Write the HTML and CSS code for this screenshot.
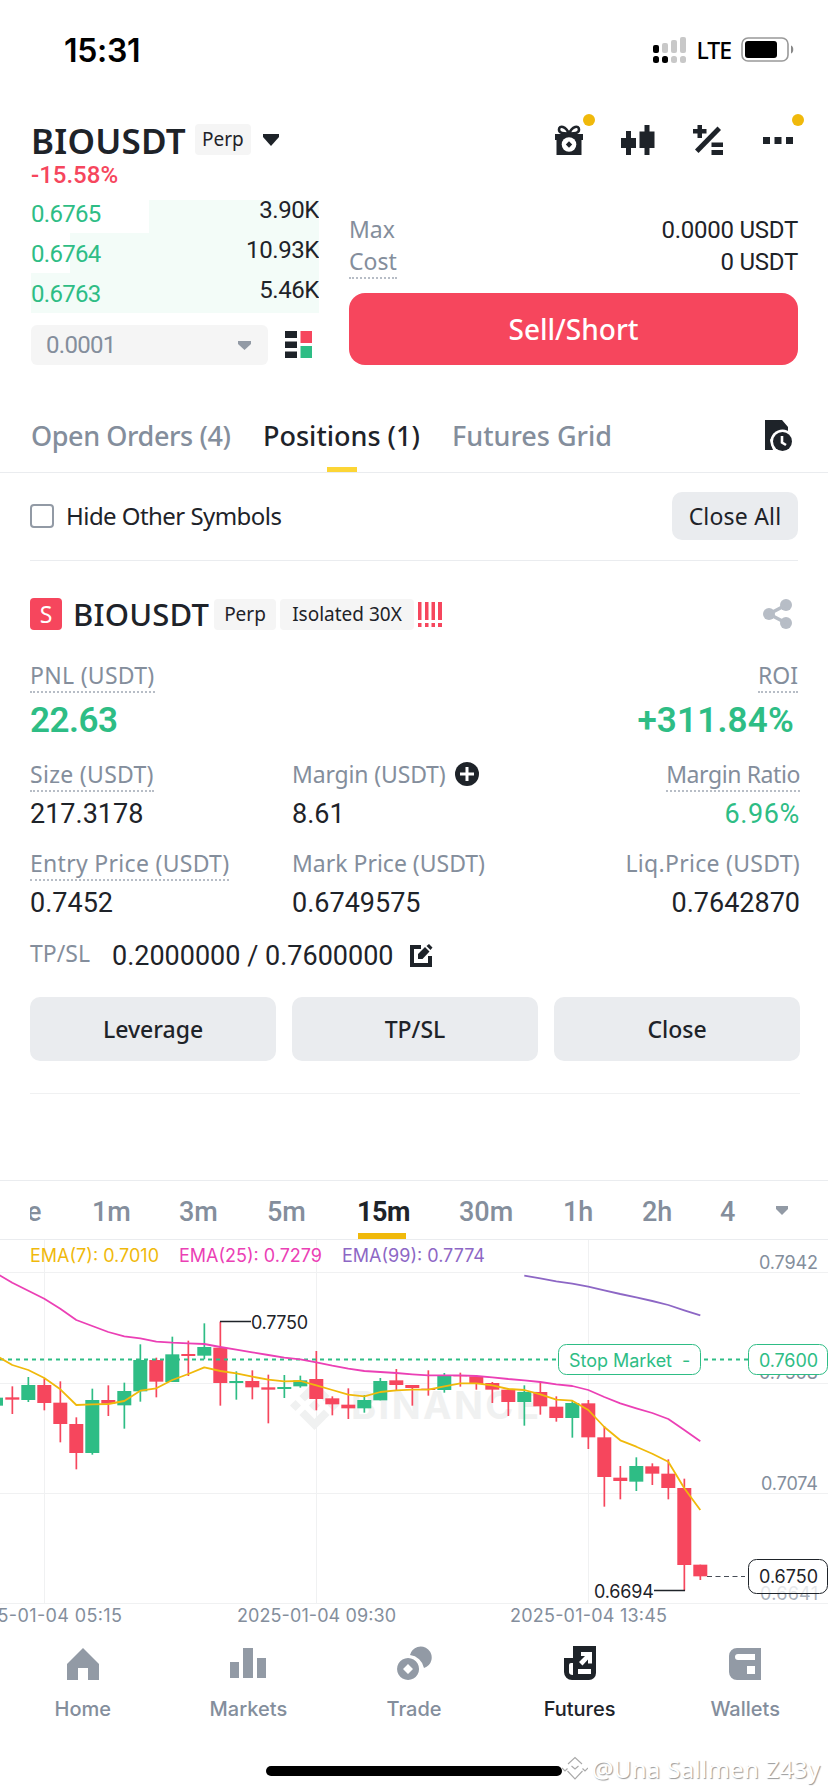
FILE: index.html
```html
<!DOCTYPE html>
<html lang="en">
<head>
  <meta charset="UTF-8">
  <meta name="viewport" content="width=device-width, initial-scale=1.0">
  <title>BIOUSDT Perp</title>
  <link rel="stylesheet" href="styles.css">
</head>
<body>

  <div class="status-bar">
    <span class="clock">15:31</span>
    <div class="status-icons">
      <svg class="signal" width="34" height="26" viewBox="0 0 34 26">
        <g fill="#000">
          <rect x="0" y="8" width="6" height="8" rx="2"/>
          <rect x="0" y="19" width="6" height="7" rx="2.5"/>
          <rect x="9" y="19" width="6" height="7" rx="2.5"/>
        </g>
        <g fill="#c8c8c8">
          <rect x="9" y="6" width="6" height="10" rx="2"/>
          <rect x="18" y="3" width="6" height="13" rx="2"/>
          <rect x="27" y="0" width="6" height="16" rx="2"/>
          <rect x="18" y="19" width="6" height="7" rx="2.5"/>
          <rect x="27" y="19" width="6" height="7" rx="2.5"/>
        </g>
      </svg>
      <span class="lte">LTE</span>
      <svg width="53" height="26" viewBox="0 0 53 26">
        <rect x="1" y="1" width="46" height="23" rx="6" fill="none" stroke="#999" stroke-width="1.6"/>
        <rect x="4" y="4" width="32" height="17" rx="3" fill="#000"/>
        <path d="M50 8.5c3 .5 3 7.500 0 8z" fill="#888"/>
      </svg>
    </div>
  </div>

  <header class="symbol-bar">
    <div class="symbol-row">
      <h1>BIOUSDT</h1>
      <span class="tag">Perp</span>
      <svg class="caret" width="16" height="12" viewBox="0 0 16 12"><path d="M0 0h16v3L8 12 0 3z" fill="#1e2329"/></svg>
      <div class="tools">
        <div class="tool">
          <svg width="28" height="30" viewBox="0 0 28 30">
            <path d="M14 9C11 1 4 0 4 4.500S10 8.500 14 8.500 24 9 24 4.500 17 1 14 9z" fill="none" stroke="#1e2329" stroke-width="2.600"/>
            <path d="M0 9h28v6h-1.500v15h-25V15H0z" fill="#1e2329"/>
            <circle cx="14" cy="19.500" r="7.300" fill="#fff"/>
            <path d="M14 16.300l3.200 3.200-3.200 3.200-3.200-3.200z" fill="#1e2329"/>
          </svg>
          <i class="dot"></i>
        </div>
        <svg width="34" height="30" viewBox="0 0 34 30">
          <path d="M0 13h5V6h5v7h5v10h-5v7H5v-7H0zM18.500 6.500h5V0h5v6.500h5V23h-5v7h-5v-7h-5z" fill="#1e2329"/>
        </svg>
        <svg width="30" height="30" viewBox="0 0 30 30" fill="#1e2329">
          <path d="M4.500 0h4.500v4h4.500v4.500H9V13H4.500V8.500H0V4h4.500zM18.500 17.500H30V22H18.500zM18.500 25H30v5H18.500z"/>
          <path d="M24.500 1.500l3.500 3.500L5.500 28 2 24.500z"/>
        </svg>
        <div class="tool more">
          <svg width="30" height="7" viewBox="0 0 30 7" fill="#1e2329"><path d="M0 0h7v7H0zM11.500 0h7v7h-7zM23 0h7v7h-7z"/></svg>
          <i class="dot"></i>
        </div>
      </div>
    </div>
    <div class="change">-15.58%</div>
  </header>

  <section class="trade">
    <div class="book-side">
      <div class="book">
        <div class="book-row"><i class="depth" style="width: 59%"></i><span class="price">0.6765</span><span class="amount">3.90K</span></div>
        <div class="book-row"><i class="depth" style="width: 86.500%"></i><span class="price">0.6764</span><span class="amount">10.93K</span></div>
        <div class="book-row"><i class="depth" style="width: 100%"></i><span class="price">0.6763</span><span class="amount">5.46K</span></div>
      </div>
      <div class="book-controls">
        <div class="select">
          <span>0.0001</span>
          <svg width="13" height="9" viewBox="0 0 13 9"><path d="M0 0h13v3L6.500 9 0 3z" fill="#929aa5"/></svg>
        </div>
        <svg width="28" height="28" viewBox="0 0 28 28">
          <path d="M0 0h12v7H0zM0 10.500h12v6.500H0zM0 20.500h12V27H0z" fill="#1e2329"/>
          <path d="M15.500 0H27v12H15.500z" fill="#f6465d"/>
          <path d="M15.500 15H27v12H15.500z" fill="#2ebd85"/>
        </svg>
      </div>
    </div>
    <div class="order-side">
      <div class="order-line"><span class="muted">Max</span><span class="num">0.0000 USDT</span></div>
      <div class="order-line"><span class="muted dotted">Cost</span><span class="num">0 USDT</span></div>
      <button class="sell">Sell/Short</button>
    </div>
  </section>

  <nav class="tabs">
    <a class="tab-orders">Open Orders (4)</a>
    <a class="tab-positions active">Positions (1)</a>
    <a class="tab-grid">Futures Grid</a>
    <svg class="history" width="28" height="32" viewBox="0 0 28 32">
      <path d="M0 0h17l6 7v6H9L5 20l3 10H0z" fill="#1e2329"/>
      <circle cx="17.500" cy="21.500" r="12" fill="#fff"/>
      <circle cx="17.500" cy="21.500" r="9.500" fill="#1e2329"/>
      <path d="M17 16v6.500l4 2.500" fill="none" stroke="#fff" stroke-width="2.600"/>
    </svg>
  </nav>

  <section class="filter">
    <span class="checkbox"></span>
    <span class="filter-text">Hide Other Symbols</span>
    <button class="close-all">Close All</button>
  </section>

  <section class="position">
    <div class="position-head">
      <span class="side">S</span>
      <h2>BIOUSDT</h2>
      <span class="tag tag-perp">Perp</span>
      <span class="tag tag-lev">Isolated 30X</span>
      <svg width="24" height="25" viewBox="0 0 24 25" fill="#f6465d">
        <path d="M0 0h3.500v18H0zM7 0h3.500v18H7zM13.500 0H17v18h-3.500zM20 0h4v18h-4zM0 21h3.500v4H0zM7 21h3.500v4H7zM13.500 21H17v4h-3.500zM20 21h4v4h-4z"/>
      </svg>
      <svg class="share" width="29" height="30" viewBox="0 0 29 30" fill="#b7bdc6">
        <circle cx="6" cy="15" r="6"/><circle cx="23" cy="6" r="6"/><circle cx="23" cy="24" r="6"/>
        <path d="M6 15l17-9M6 15l17 9" stroke="#b7bdc6" stroke-width="3.500"/>
      </svg>
    </div>

    <div class="pnl">
      <div><span class="label dotted wide">PNL (USDT)</span><div class="big b-pnl">22.63</div></div>
      <div class="right"><span class="label dotted">ROI</span><div class="big b-roi">+311.84%</div></div>
    </div>

    <div class="stats">
      <div><span class="label dotted wide">Size (USDT)</span><div class="value">217.3178</div></div>
      <div>
        <span class="label tight">Margin (USDT)</span>
        <svg class="plus" width="24" height="24" viewBox="0 0 24 24"><circle cx="12" cy="12" r="12" fill="#1e2329"/><path d="M12 5v14M5 12h14" stroke="#fff" stroke-width="3"/></svg>
        <div class="value">8.61</div>
      </div>
      <div class="right"><span class="label dotted tighter">Margin Ratio</span><div class="value green">6.96%</div></div>
      <div><span class="label dotted wide">Entry Price (USDT)</span><div class="value">0.7452</div></div>
      <div><span class="label">Mark Price (USDT)</span><div class="value">0.6749575</div></div>
      <div class="right"><span class="label wide">Liq.Price (USDT)</span><div class="value">0.7642870</div></div>
    </div>

    <div class="tpsl">
      <span class="label">TP/SL</span>
      <span class="value">0.2000000 / 0.7600000</span>
      <svg width="23" height="23" viewBox="0 0 23 23" fill="#1e2329">
        <path d="M0 1h11v4H4v14h14v-7h4v11H0z"/>
        <path d="M8 15v-5l7-7 4.500 4.500-7 7.500zM16.500 2L19 0l3.500 3.500-2 2.500z"/>
      </svg>
    </div>

    <div class="actions">
      <button>Leverage</button>
      <button>TP/SL</button>
      <button>Close</button>
    </div>
  </section>

  <section class="kline">
    <div class="intervals">
      <span class="cut"><b>e</b></span>
      <span class="i-1m">1m</span>
      <span class="i-3m">3m</span>
      <span class="i-5m">5m</span>
      <span class="i-15m active">15m</span>
      <span class="i-30m">30m</span>
      <span class="i-1h">1h</span>
      <span class="i-2h">2h</span>
      <span class="i-4">4</span>
      <svg width="12" height="9" viewBox="0 0 12 9"><path d="M0 0h12v3L6 9 0 3z" fill="#929aa5"/></svg>
    </div>
    <svg class="chart" width="828" height="390" viewBox="0 0 828 390">
      <g class="grid-lines">
        <path d="M44.500 0v364M316.500 0v364M588.500 0v364M0 32.500h828M0 143.500h828M0 253.500h828M0 363.500h828"/>
      </g>
      <g fill="#f0f1f1">
        <path transform="translate(290 141) scale(2.040)" d="M16.624 13.920l2.717 2.715-7.353 7.353-7.353-7.352 2.718-2.716 4.635 4.659zM21.260 9.284L24 12l-2.715 2.716L18.568 12zM11.988 9.285l2.717 2.691-2.717 2.717L9.272 12zM2.716 9.284L5.409 12l-2.691 2.692L0 12zM11.988.011l7.353 7.329-2.717 2.716-4.636-4.636-4.635 4.660-2.718-2.716z"/>
        <text class="brand" x="351" y="179" textLength="188">BINANCE</text>
      </g>
      <g class="axis">
        <text x="759" y="29" textLength="59">0.7942</text>
        <text x="759" y="139" textLength="59">0.7508</text>
        <text x="761" y="250" textLength="57">0.7074</text>
        <text x="760" y="360" textLength="58" opacity=".7">0.6641</text>
        <text x="-37" y="382" textLength="159">2025-01-04 05:15</text>
        <text x="237" y="382" textLength="159">2025-01-04 09:30</text>
        <text x="510" y="382" textLength="157">2025-01-04 13:45</text>
      </g>
      <g id="candles"></g>
      <path class="stop-line" d="M0 119.500h558M704 119.500h44"/>
      <path id="ema7" class="ema" stroke="#f0b90b"/>
      <path id="ema25" class="ema" stroke="#eb40b5"/>
      <path id="ema99" class="ema" stroke="#8d67c5"/>
      <g class="marks">
        <path d="M220 81.500h31M654 350.500h31" stroke="#1e2329" stroke-width="1.300"/>
        <text x="251" y="89" textLength="57">0.7750</text>
        <text x="594" y="358" textLength="60">0.6694</text>
        <path d="M707 336.500h38" stroke="#474d57" stroke-width="1.200" stroke-dasharray="5 3.500"/>
      </g>
      <g class="legend">
        <text x="30" y="22" textLength="129" fill="#f0b90b">EMA(7): 0.7010</text>
        <text x="179" y="22" textLength="143" fill="#eb40b5">EMA(25): 0.7279</text>
        <text x="342" y="22" textLength="143" fill="#8d67c5">EMA(99): 0.7774</text>
      </g>
      <g class="stop">
        <rect x="558.500" y="104.500" width="142" height="30" rx="8"/>
        <rect x="748.500" y="104.500" width="79" height="30" rx="8"/>
        <text x="569" y="127" textLength="103">Stop Market</text>
        <text x="682" y="127">-</text>
        <text x="759" y="127" textLength="59">0.7600</text>
      </g>
      <g class="last">
        <rect x="748.500" y="319.500" width="79" height="34" rx="8"/>
        <text x="759" y="343" textLength="59">0.6750</text>
      </g>
    </svg>
  </section>

  <nav class="bottom-nav">
    <a>
      <svg width="32" height="34" viewBox="0 0 32 34"><path d="M16 2l16 16v16H21V22H11v12H0V18z"/></svg>
      <span>Home</span>
    </a>
    <a>
      <svg width="36" height="34" viewBox="0 0 36 34"><path d="M0 16h9v16H0zM13 2h10v30H13zM27 12h9v20h-9z"/></svg>
      <span>Markets</span>
    </a>
    <a>
      <svg width="36" height="34" viewBox="0 0 36 34">
        <path d="M14 9A11 11 0 1 1 28 22A16 16 0 0 0 14 9z"/>
        <path fill-rule="evenodd" d="M12 12a11 11 0 1 0 .1 0zM12 18l5 5-5 5-5-5z"/>
      </svg>
      <span>Trade</span>
    </a>
    <a class="active">
      <svg width="32" height="34" viewBox="0 0 32 34">
        <path fill-rule="evenodd" d="M9 0h23v27a7 7 0 0 1-7 7H8a8 8 0 0 1-8-8V12h9zM14 23v5h13v-5zM5 19v7q0 3 4 3V17H7q-2 0-2 2zM17 6v4h4l-6 6 3.500 3.500 5.500-6v4h4V6z"/>
      </svg>
      <span>Futures</span>
    </a>
    <a>
      <svg width="32" height="34" viewBox="0 0 32 34">
        <path fill-rule="evenodd" d="M8 2h24v32H8a8 8 0 0 1-8-8V10a8 8 0 0 1 8-8zM9 8a3 3 0 0 0 0 6h17V8zM18 20v8h8v-8z"/>
      </svg>
      <span>Wallets</span>
    </a>
  </nav>
  <div class="home-indicator"></div>

  <div class="credit">
    <svg width="26" height="26" viewBox="0 0 26 26" fill="none" stroke="#a8a8a8" stroke-width="1.100">
      <path d="M6 8l7-6.500L20 8M9.500 10l3.500 3 3.500-3M5.500 15l7.500 8 7.500-8M0 12l3 3 2.500-2.500M20.500 12.500L23 15l3-3"/>
    </svg>
    <span>@Una Sallmen Z43y</span>
  </div>

  <script src="chart.js"></script>
</body>
</html>
```
FILE: styles.css
```css
* {
  box-sizing: border-box;
}

body {
  margin: 0;
  width: 828px;
  height: 1792px;
  position: relative;
  overflow: hidden;
  background: #fff;
  color: #1e2329;
  font-family: 'Noto Sans', sans-serif;
  font-size: 23px;
}

h1, h2 {
  margin: 0;
}

svg {
  display: block;
  flex-shrink: 0;
}

button {
  border: 0;
  padding: 0 0 1px;
  color: #1e2329;
  background: #eaecef;
  border-radius: 10px;
  font-family: 'Noto Sans', sans-serif;
  font-size: 23px;
}

/* status bar */
.status-bar {
  display: flex;
  align-items: center;
  justify-content: space-between;
  height: 100px;
  padding: 0 34px 0 64px;
  color: #000;
}

.clock {
  padding-top: 1px;
  font: 600 32px/40px Inter, sans-serif;
  letter-spacing: -0.3px;
}

.status-icons {
  display: flex;
  align-items: center;
}

.lte {
  margin: 0 10px 1px 9px;
  font-size: 23px;
  font-weight: 500;
  line-height: 26px;
  letter-spacing: -1px;
}

/* symbol */
.symbol-bar {
  height: 100px;
  padding: 24px 30px 0 31px;
}

.symbol-row {
  display: flex;
  align-items: center;
  height: 34px;
}

h1 {
  width: 164px;
  font-size: 35px;
  font-weight: 600;
  line-height: 34px;
  letter-spacing: 0.2px;
}

.tag {
  height: 31px;
  margin-bottom: 3px;
  padding: 0 7px;
  border-radius: 4px;
  background: #f5f5f5;
  font-size: 19px;
  line-height: 31px;
  white-space: nowrap;
}

.caret {
  margin-left: 12px;
  margin-bottom: 2px;
}

.tools {
  display: flex;
  align-items: center;
  margin: 0 5px 2px auto;
}

.tools > * {
  margin-left: 38px;
}

.tool {
  position: relative;
}

.tools .more {
  margin-left: 40px;
}

.dot {
  position: absolute;
  top: -11px;
  right: -12px;
  width: 12px;
  height: 12px;
  border-radius: 50%;
  background: #f0b90b;
}

.more .dot {
  top: -23px;
  right: -11px;
}

.change {
  margin-top: 5px;
  color: #f6465d;
  font: 500 24px/25px Roboto, sans-serif;
}

/* order book + order form */
.trade {
  display: flex;
  justify-content: space-between;
  height: 165px;
  padding: 0 30px 0 31px;
}

.book-side {
  width: 288px;
}

.book {
  display: flex;
  flex-direction: column;
  justify-content: flex-end;
  height: 113px;
  overflow: hidden;
}

.book-row {
  position: relative;
  display: flex;
  flex-shrink: 0;
  justify-content: space-between;
  height: 40px;
  font: 24px/42px Roboto, sans-serif;
}

.depth {
  position: absolute;
  top: 0;
  right: 0;
  height: 40px;
  background: #f3fcf8;
}

.price {
  position: relative;
  color: #2ebd85;
  letter-spacing: -0.7px;
}

.amount {
  position: relative;
  line-height: 35px;
  letter-spacing: -0.4px;
}

.book-controls {
  display: flex;
  align-items: center;
  justify-content: space-between;
  margin-top: 12px;
  padding-right: 6px;
}

.select {
  display: flex;
  align-items: center;
  justify-content: space-between;
  width: 237px;
  height: 40px;
  padding: 0 17px 0 15px;
  border-radius: 6px;
  background: #f5f5f5;
  color: #848e9c;
  font: 24px/42px Roboto, sans-serif;
  letter-spacing: -0.7px;
}

.order-side {
  width: 449px;
  padding-top: 14px;
}

.order-line {
  display: flex;
  justify-content: space-between;
  height: 32px;
  font-size: 23px;
  line-height: 30px;
}

.muted {
  color: #848e9c;
}

.dotted {
  border-bottom: 2px dotted #b7bdc6;
}

.order-line .dotted {
  height: 33px;
}

.num {
  font-family: Roboto, sans-serif;
  font-size: 24px;
  line-height: 32px;
  letter-spacing: -0.25px;
}

.sell {
  width: 449px;
  height: 72px;
  margin-top: 15px;
  border-radius: 16px;
  background: #f6465d;
  color: #fff;
  font-size: 28px;
  font-weight: 500;
}

/* tabs */
.tabs {
  display: flex;
  height: 108px;
  padding: 51px 35px 0 31px;
  border-bottom: 1px solid #eaecef;
  color: #848e9c;
  font-size: 27px;
  font-weight: 500;
  line-height: 40px;
}

.tabs a {
  position: relative;
  white-space: nowrap;
}

.tab-orders {
  width: 232px;
  letter-spacing: -0.4px;
}

.tab-positions {
  width: 189px;
}

.tabs .active {
  color: #1e2329;
}

.tabs .active::after {
  content: "";
  position: absolute;
  left: 64px;
  bottom: 0;
  width: 30px;
  height: 5px;
  background: #fcd535;
}

.history {
  margin: 4px 0 0 auto;
}

/* filter */
.filter {
  display: flex;
  align-items: center;
  height: 88px;
  margin: 0 30px;
  border-bottom: 1px solid #eaecef;
}

.checkbox {
  width: 24px;
  height: 24px;
  margin: 0 12px 1px 0;
  border: 2px solid #929aa5;
  border-radius: 4px;
}

.filter-text {
  padding-bottom: 2px;
  font-size: 24px;
  letter-spacing: -0.55px;
}

.close-all {
  width: 126px;
  height: 48px;
  margin: 0 0 1px auto;
  letter-spacing: 0.2px;
}

/* position */
.position {
  margin: 0 28px 0 30px;
  padding-top: 37px;
  height: 533px;
  border-bottom: 1px solid #f0f1f2;
}

.position-head {
  display: flex;
  align-items: center;
  height: 32px;
}

.side {
  width: 32px;
  height: 32px;
  border-radius: 4px;
  background: #f6465d;
  color: #fff;
  font-size: 23px;
  line-height: 32px;
  text-align: center;
}

h2 {
  width: 141px;
  margin-left: 11px;
  font-size: 31px;
  font-weight: 500;
  line-height: 32px;
  letter-spacing: 0.2px;
}

.position-head .tag {
  margin: 0 4px 0 0;
  padding: 0;
  text-align: center;
}

.tag-perp {
  width: 62px;
}

.tag-lev {
  width: 134px;
}

.share {
  margin: 0 8px 0 auto;
}

.label {
  display: inline-block;
  height: 32px;
  color: #848e9c;
  font-size: 23px;
  line-height: 29px;
  vertical-align: top;
  white-space: nowrap;
}

.wide {
  letter-spacing: 0.3px;
}

.tight {
  letter-spacing: -0.15px;
}

.tighter {
  letter-spacing: -0.4px;
}

.pnl {
  display: flex;
  justify-content: space-between;
  margin-top: 31px;
}

.right {
  text-align: right;
}

.pnl .right {
  padding-right: 2px;
}

.big {
  margin-top: 8px;
  color: #2ebd85;
  font: 600 35px/40px Roboto, sans-serif;
}

.b-pnl {
  letter-spacing: -0.5px;
}

.b-roi {
  padding-right: 4px;
  letter-spacing: 0.2px;
}

.stats {
  display: grid;
  grid-template-columns: repeat(3, 246px);
  gap: 17px 16px;
  margin-top: 19px;
}

.stats > div {
  white-space: nowrap;
}

.value {
  margin-top: 4px;
  font: 27px/36px Roboto, sans-serif;
}

.green {
  color: #2ebd85;
  letter-spacing: 0.6px;
}

.plus {
  display: inline-block;
  margin: 2px 0 0 4px;
  vertical-align: top;
}

.tpsl {
  display: flex;
  align-items: center;
  height: 36px;
  margin-top: 16px;
}

.tpsl .value {
  margin: 1px 16px 0 22px;
}

.actions {
  display: flex;
  gap: 16px;
  margin-top: 24px;
}

.actions button {
  width: 246px;
  height: 64px;
  font-weight: 500;
}

/* chart */
.kline {
  margin-top: 86px;
  border-top: 1px solid #eaecef;
}

.intervals {
  display: flex;
  align-items: center;
  height: 59px;
  padding-left: 30px;
  border-bottom: 1px solid #eaecef;
  color: #848e9c;
  font: 500 27px/54px Roboto, sans-serif;
}

.intervals span {
  padding-top: 4px;
}

.intervals b {
  font-weight: 500;
}

/* label scrolled partly out of view */
.cut {
  width: 62px;
  overflow: hidden;
}

.cut b {
  margin-left: -3px;
}

.i-1m { width: 87px; }
.i-3m { width: 88px; }
.i-5m { width: 90px; }
.i-15m { width: 102px; }
.i-30m { width: 104px; }
.i-1h { width: 79px; }
.i-2h { width: 78px; }
.i-4 { width: 56px; }

.intervals .active {
  position: relative;
  color: #1e2329;
  font-weight: 700;
  letter-spacing: -0.5px;
}

.intervals .active::after {
  content: "";
  position: absolute;
  left: 1px;
  bottom: 0;
  width: 48px;
  height: 6px;
  background: #f0b90b;
}

.chart text {
  font-family: Inter, sans-serif;
  font-size: 18px;
}

.chart .brand {
  font-size: 38px;
  font-weight: 700;
}

.grid-lines {
  stroke: #f0f1f2;
  stroke-width: 1;
}

.axis {
  fill: #848e9c;
}

.ema {
  fill: none;
  stroke-width: 1.8;
  stroke-linejoin: round;
}

.stop-line {
  fill: none;
  stroke: #2ebd85;
  stroke-width: 2;
  stroke-dasharray: 4 4;
}

.stop rect {
  fill: #fff;
  stroke: #2ebd85;
}

.stop text {
  fill: #2ebd85;
}

.last rect {
  fill: #fff;
  fill-opacity: .7;
  stroke: #1e2329;
}

.marks text,
.last text {
  fill: #1e2329;
}

.up {
  fill: #2ebd85;
}

.down {
  fill: #f6465d;
}

/* bottom navigation */
.bottom-nav {
  display: flex;
  height: 136px;
  padding-top: 16px;
  fill: #929aa5;
  color: #848e9c;
  font: 500 20px/24px Inter, sans-serif;
}

.bottom-nav a {
  display: flex;
  flex: 1;
  flex-direction: column;
  align-items: center;
  gap: 17px;
}

.bottom-nav .active {
  fill: #1e2329;
  color: #1e2329;
}

.home-indicator {
  width: 296px;
  height: 10px;
  margin: 0 auto;
  border-radius: 5px;
  background: #000;
}

.credit {
  position: absolute;
  left: 562px;
  top: 1754px;
  display: flex;
  align-items: center;
  gap: 4px;
  height: 30px;
  color: #fff;
  font-size: 24px;
  line-height: 30px;
  letter-spacing: 0.3px;
  text-shadow: 1px 1px 1px #999;
  white-space: nowrap;
}
```
FILE: chart.js
```js
const STEP = 16;
const FIRST_X = 12.3;

// [up, body top, body bottom, wick top, wick bottom], 3 units per pixel
const candles = [
  [0, 292, 299, 259, 342], [1, 255, 300, 231, 306], [0, 255, 309, 235, 331],
  [0, 308, 372, 244, 427], [0, 372, 459, 352, 508], [1, 300, 459, 266, 464],
  [0, 300, 311, 256, 348], [1, 273, 316, 248, 386], [1, 180, 274, 133, 305],
  [0, 180, 245, 173, 292], [1, 163, 246, 110, 246], [0, 162, 168, 122, 228],
  [1, 141, 167, 70, 178], [0, 143, 249, 65, 317], [1, 243, 249, 214, 299],
  [0, 243, 262, 211, 298], [0, 262, 269, 224, 370], [1, 261, 267, 225, 294],
  [1, 241, 259, 227, 263], [0, 237, 297, 153, 331], [0, 295, 313, 289, 346],
  [0, 314, 325, 265, 357], [1, 300, 325, 285, 338], [1, 243, 301, 234, 301],
  [0, 241, 255, 207, 270], [0, 255, 264, 255, 317], [0, 266, 270, 211, 287],
  [1, 227, 270, 219, 278], [0, 225, 229, 218, 260], [0, 229, 252, 225, 269],
  [0, 249, 269, 246, 309], [0, 269, 306, 265, 348], [1, 276, 306, 256, 377],
  [0, 276, 319, 247, 344], [0, 320, 354, 289, 365], [1, 309, 354, 303, 413],
  [0, 310, 412, 300, 447], [0, 412, 531, 378, 620], [0, 533, 543, 498, 598],
  [1, 498, 545, 472, 573], [0, 499, 521, 490, 555], [0, 521, 564, 478, 598],
  [0, 564, 795, 536, 872], [0, 794, 829, 794, 840]
];

const ema7 = [167, 195, 210, 234, 268, 315, 313, 312, 303, 272, 265, 240, 222, 202, 213, 220, 230, 239, 244, 243, 256, 270, 284, 289, 276, 271, 269, 269, 259, 250, 250, 256, 267, 270, 283, 299, 302, 330, 381, 421, 440, 461, 485, 565, 630];
const ema25 = [-80, -52, -28, -4, 26, 60, 78, 96, 109, 115, 125, 128, 130, 132, 141, 149, 157, 165, 173, 178, 187, 197, 206, 213, 216, 219, 223, 226, 226, 226, 228, 232, 237, 241, 246, 253, 258, 270, 291, 310, 325, 339, 357, 390, 424];
const ema99 = [-73, -65, -56, -49, -40, -29, -18, -8, 3, 15, 31, 46];

const toX = i => FIRST_X + i * STEP;
const toY = v => 60 + v / 3;

function rect(x, y, w, h, cls) {
  const el = document.createElementNS('http://www.w3.org/2000/svg', 'rect');
  el.setAttribute('x', x);
  el.setAttribute('y', y);
  el.setAttribute('width', w);
  el.setAttribute('height', h);
  el.setAttribute('class', cls);
  document.getElementById('candles').appendChild(el);
}

function line(id, values, start) {
  const points = values.map((v, i) => toX(start + i).toFixed(1) + ' ' + toY(v).toFixed(1));
  document.getElementById(id).setAttribute('d', 'M' + points.join('L'));
}

rect(-11, toY(293), 14, 8, 'up');
candles.forEach(([up, top, bottom, high, low], i) => {
  const cls = up ? 'up' : 'down';
  rect(toX(i) - 0.8, toY(high), 1.7, (low - high) / 3, cls);
  rect(toX(i) - 7, toY(top), 14, (bottom - top) / 3, cls);
});

line('ema7', ema7, -1);
line('ema25', ema25, -1);
line('ema99', ema99, 32);
```
